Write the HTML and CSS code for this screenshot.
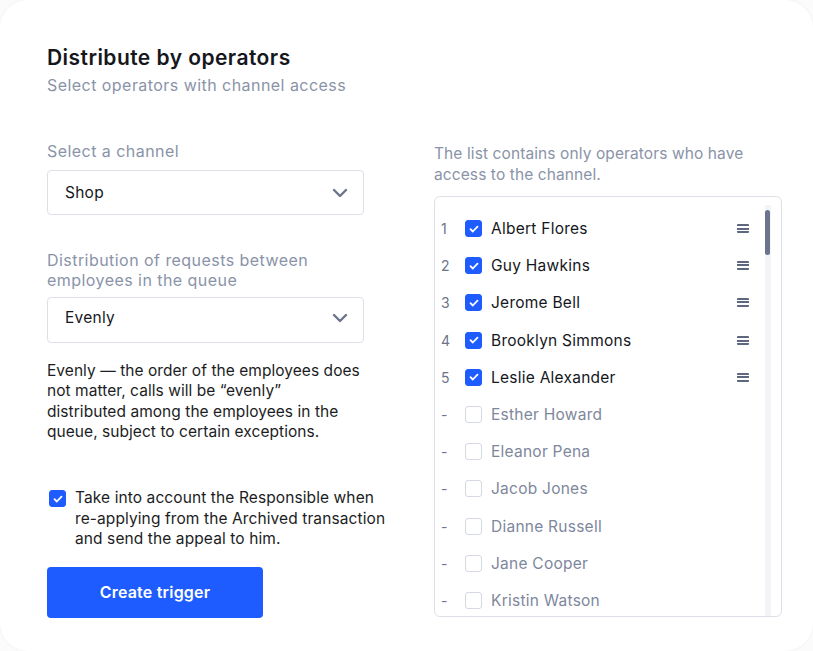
FILE: index.html
```html
<!DOCTYPE html>
<html lang="en">
<head>
  <meta charset="UTF-8" />
  <meta name="viewport" content="width=device-width, initial-scale=1.0"/>
  <title>Distribute by operators</title>
  <link rel="stylesheet" href="styles.css">
</head>
<body>

  <div class="card">
    <header>
      <h1>Distribute by operators</h1>
      <p class="subtitle">Select operators with channel access</p>
    </header>

    <div class="columns">
      <section class="settings">
        <label class="field-label">Select a channel</label>
        <div class="select">
          <span>Shop</span>
          <svg class="chevron" viewBox="0 0 16 10" width="16" height="10"><path d="M2 2l6 6 6-6"/></svg>
        </div>

        <label class="field-label second">Distribution of requests between employees in the queue</label>
        <div class="select tall">
          <span>Evenly</span>
          <svg class="chevron" viewBox="0 0 16 10" width="16" height="10"><path d="M2 2l6 6 6-6"/></svg>
        </div>

        <p class="hint">Evenly — the order of the employees does<br>not matter, calls will be “evenly”<br>distributed among the employees in the<br>queue, subject to certain exceptions.</p>

        <div class="option">
          <span class="box checked"><svg viewBox="0 0 12 12" width="12" height="12"><path d="M2.5 6.2l2.3 2.3 4.7-4.9"/></svg></span>
          <span>Take into account the Responsible when re-applying from the Archived transaction and send the appeal to him.</span>
        </div>

        <button class="primary">Create trigger</button>
      </section>

      <section class="operators">
        <p class="note">The list contains only operators who have access to the channel.</p>

        <div class="list">
          <ul class="rows">
            <li class="on"><span class="num">1</span><span class="box checked"><svg viewBox="0 0 12 12" width="12" height="12"><path d="M2.5 6.2l2.3 2.3 4.7-4.9"/></svg></span><span class="name">Albert Flores</span><span class="grip"></span></li>
            <li class="on"><span class="num">2</span><span class="box checked"><svg viewBox="0 0 12 12" width="12" height="12"><path d="M2.5 6.2l2.3 2.3 4.7-4.9"/></svg></span><span class="name">Guy Hawkins</span><span class="grip"></span></li>
            <li class="on"><span class="num">3</span><span class="box checked"><svg viewBox="0 0 12 12" width="12" height="12"><path d="M2.5 6.2l2.3 2.3 4.7-4.9"/></svg></span><span class="name">Jerome Bell</span><span class="grip"></span></li>
            <li class="on"><span class="num">4</span><span class="box checked"><svg viewBox="0 0 12 12" width="12" height="12"><path d="M2.5 6.2l2.3 2.3 4.7-4.9"/></svg></span><span class="name">Brooklyn Simmons</span><span class="grip"></span></li>
            <li class="on"><span class="num">5</span><span class="box checked"><svg viewBox="0 0 12 12" width="12" height="12"><path d="M2.5 6.2l2.3 2.3 4.7-4.9"/></svg></span><span class="name">Leslie Alexander</span><span class="grip"></span></li>
            <li><span class="num">-</span><span class="box"></span><span class="name">Esther Howard</span></li>
            <li><span class="num">-</span><span class="box"></span><span class="name">Eleanor Pena</span></li>
            <li><span class="num">-</span><span class="box"></span><span class="name">Jacob Jones</span></li>
            <li><span class="num">-</span><span class="box"></span><span class="name">Dianne Russell</span></li>
            <li><span class="num">-</span><span class="box"></span><span class="name">Jane Cooper</span></li>
            <li><span class="num">-</span><span class="box"></span><span class="name">Kristin Watson</span></li>
          </ul>
          <div class="track"><div class="thumb"></div></div>
        </div>
      </section>
    </div>
  </div>

</body>
</html>
```

FILE: styles.css
```css
body {
  font-family: 'Inter', 'Open Sans', sans-serif;
  margin: 0;
  padding: 0;
  background: #fbfbfc;
  color: #1b1d23;
}

.card {
  box-sizing: border-box;
  height: 651px;
  background: white;
  border-radius: 28px;
  box-shadow: 0 0 3px rgba(20, 30, 60, 0.06);
  padding: 46px 31px 0 47px;
}

h1 {
  margin: 0;
  font-size: 21px;
  line-height: 24px;
  font-weight: 600;
  letter-spacing: 0.45px;
  color: #15171c;
}

.subtitle {
  margin: 4px 0 0;
  font-size: 16px;
  line-height: 22px;
  letter-spacing: 0.45px;
  color: #8a93a8;
}

.columns {
  display: grid;
  grid-template-columns: 345px 348px;
  column-gap: 42px;
  margin-top: 44px;
}

/* left column: form fields */
.field-label {
  display: block;
  font-size: 16px;
  line-height: 22px;
  letter-spacing: 0.45px;
  color: #8a93a8;
  margin-bottom: 8px;
}

.field-label.second {
  width: 317px;
  line-height: 20px;
  margin-top: 35px;
  margin-bottom: 7px;
}

.select {
  box-sizing: border-box;
  width: 317px;
  height: 45px;
  border: 1px solid #dde0e7;
  border-radius: 4px;
  display: flex;
  align-items: center;
  justify-content: space-between;
  padding: 0 15px 0 17px;
  font-size: 15.5px;
  letter-spacing: 0.25px;
  color: #15171c;
}

.select.tall {
  height: 46px;
  padding-bottom: 5px;
}

.chevron path {
  fill: none;
  stroke: #6b748a;
  stroke-width: 2.4;
  stroke-linecap: round;
  stroke-linejoin: round;
}

.hint {
  margin: 18px 0 0;
  font-size: 15.5px;
  line-height: 20.3px;
  letter-spacing: 0.05px;
  color: #1b1d23;
}

.option {
  display: flex;
  gap: 9px;
  margin-top: 46px;
  padding-left: 2px;
  font-size: 15.5px;
  line-height: 20.5px;
  letter-spacing: 0.1px;
}

.option .box {
  margin-top: 2px;
}

.box {
  box-sizing: border-box;
  flex: none;
  width: 17px;
  height: 17px;
  border: 1px solid #d5d9e1;
  border-radius: 3px;
  background: white;
  display: flex;
  align-items: center;
  justify-content: center;
}

.box.checked {
  background: #1e5cff;
  border-color: #1e5cff;
}

.box path {
  fill: none;
  stroke: white;
  stroke-width: 1.8;
  stroke-linecap: round;
  stroke-linejoin: round;
}

.primary {
  display: block;
  margin-top: 17px;
  width: 216px;
  height: 51px;
  border: 0;
  border-radius: 4px;
  background: #1e5cff;
  color: white;
  font-family: inherit;
  font-size: 16px;
  font-weight: 600;
  letter-spacing: 0.2px;
  cursor: pointer;
}

/* right column: operator list */
.note {
  margin: 3px 0 0;
  font-size: 15.5px;
  line-height: 21px;
  letter-spacing: 0.1px;
  color: #8a93a8;
}

.list {
  box-sizing: border-box;
  margin-top: 11px;
  height: 421px;
  border: 1px solid #dde0e7;
  border-radius: 6px;
  display: flex;
  overflow: hidden;
}

.rows {
  flex: 1;
  list-style: none;
  margin: 0;
  padding: 13px 0 0 6px;
}

.rows li {
  height: 37.2px;
  display: flex;
  align-items: center;
  font-size: 15.5px;
  letter-spacing: 0.25px;
  color: #7e879c;
}

.rows li.on {
  color: #15171c;
}

.num {
  width: 24px;
  font-size: 14px;
  color: #6b748a;
}

.name {
  flex: 1;
  margin-left: 9px;
}

/* drag handle: three bars */
.grip {
  width: 12px;
  height: 9px;
  margin-right: 16px;
  background: linear-gradient(#5e677d 0 2px, transparent 2px 3.5px, #5e677d 3.5px 5.5px, transparent 5.5px 7px, #5e677d 7px 9px);
  border-radius: 1px;
}

.track {
  width: 6px;
  margin: 8px 10px 0 0;
  background: #f3f4f8;
}

.thumb {
  width: 5px;
  height: 45px;
  margin-top: 5px;
  border-radius: 3px;
  background: #6b748a;
}
```
